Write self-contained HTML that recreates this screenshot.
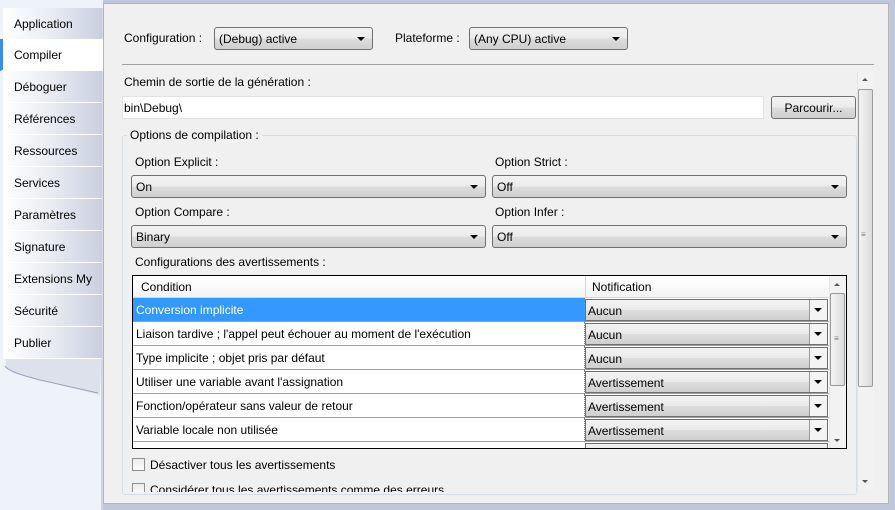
<!DOCTYPE html>
<html><head><meta charset="utf-8"><style>
*{box-sizing:border-box;margin:0;padding:0}
body{width:895px;height:510px;background:#bfc8da;font-family:"Liberation Sans",sans-serif;font-size:12px;color:#000;position:relative;overflow:hidden}
.a{position:absolute}
#side{left:0;top:0;width:103px;height:510px;background:#eef2f9}
.tab{position:absolute;left:3px;width:99px;height:32px;padding:9px 0 0 11px;background:linear-gradient(90deg,#fff 0%,#e8ebf2 50%,#c9cfdf 100%);border-bottom:1px solid #fff}
.tab.sel{background:#fff;left:0;width:104px;border-left:3px solid #3a8ee6;padding-left:11px}
#panel{left:103px;top:3px;width:786px;height:501px;background:#f0f0f0;border:1px solid #b5b5b5}
.cb,.btn{position:absolute;height:23px;border:1px solid #707070;border-radius:3px;background:linear-gradient(#f2f2f2 0%,#ebebeb 50%,#dddddd 51%,#cfcfcf 100%);padding:4px 0 0 4px}
.cb:after{content:"";position:absolute;right:7px;top:9px;border-left:4px solid transparent;border-right:4px solid transparent;border-top:4px solid #000}
.row{position:absolute;left:133px;width:696px;height:24px;border-bottom:1px solid #a0a0a0;background:#fff}
.row .t{position:absolute;left:3px;top:5px}
.row .n{position:absolute;left:452px;top:1px;width:243px;height:22px;border:1px solid #707070;background:linear-gradient(#f2f2f2 0%,#ebebeb 50%,#dddddd 51%,#cfcfcf 100%);padding:4px 0 0 2px}
.row .n:after{content:"";position:absolute;right:0;top:0;width:17px;height:20px;border-left:1px solid #999;background:#f4f4f4}
.row .n i{position:absolute;right:5px;top:8px;border-left:4px solid transparent;border-right:4px solid transparent;border-top:4px solid #000;z-index:2}
.row .sp{position:absolute;left:451px;top:0;width:1px;height:24px;border-left:1px dotted #888}
.chk{position:absolute;width:13px;height:13px;border:1px solid #8f8f8f;background:linear-gradient(#ececec,#fcfcfc)}
.sb{background:#f2f2f2;border-left:1px solid #e5e5e5}
.thumb{position:absolute;border:1px solid #9a9a9a;border-radius:2px;background:linear-gradient(90deg,#f3f3f3,#dcdcdc)}
</style></head><body>
<div id="side" class="a">
<svg class="a" style="left:0;top:0" width="103" height="510"><path d="M3 8 H102 V300 L100 395 Q60 385 20 375 Q8 372 6 366 Z" fill="#dce1ec"/><path d="M5 366 Q8 372 40 380 L98 393" stroke="#9aa2b8" fill="none"/><line x1="102" y1="8" x2="102" y2="510" stroke="#b0b8cc"/></svg>
<div class="tab" style="top:8px">Application</div>
<div class="tab sel" style="top:39px">Compiler</div>
<div class="tab" style="top:71px">Déboguer</div>
<div class="tab" style="top:103px">Références</div>
<div class="tab" style="top:135px">Ressources</div>
<div class="tab" style="top:167px">Services</div>
<div class="tab" style="top:199px">Paramètres</div>
<div class="tab" style="top:231px">Signature</div>
<div class="tab" style="top:263px">Extensions My</div>
<div class="tab" style="top:295px">Sécurité</div>
<div class="tab" style="top:327px">Publier</div>
</div>
<div id="panel" class="a"></div>
<div class="a" style="left:124px;top:31px">Configuration :</div>
<div class="cb" style="left:214px;top:27px;width:159px">(Debug) active</div>
<div class="a" style="left:395px;top:31px">Plateforme :</div>
<div class="cb" style="left:469px;top:27px;width:159px">(Any CPU) active</div>
<div class="a" style="left:122px;top:64px;width:752px;height:1px;background:#a0a0a0"></div>
<div class="a sb" style="left:857px;top:72px;width:17px;height:418px"></div>
<div class="thumb" style="left:858px;top:89px;width:15px;height:298px"></div>
<div class="a" style="left:861px;top:230px;font-size:8px;color:#777">≡</div>
<div class="a" style="left:862px;top:78px;border-left:3px solid transparent;border-right:3px solid transparent;border-bottom:3px solid #555"></div>
<div class="a" style="left:862px;top:480px;border-left:3px solid transparent;border-right:3px solid transparent;border-top:3px solid #555"></div>
<div class="a" style="left:124px;top:75px">Chemin de sortie de la génération :</div>
<div class="a" style="left:122px;top:96px;width:642px;height:23px;background:#fff;border:1px solid #e2e2e2;padding:4px 0 0 1px">bin\Debug\</div>
<div class="btn" style="left:771px;top:96px;width:85px;text-align:center;padding-left:0">Parcourir...</div>
<div class="a" style="left:122px;top:135px;width:735px;height:360px;border:1px solid #d5dfe5;border-radius:3px"></div>
<div class="a" style="left:127px;top:128px;background:#f0f0f0;padding:0 3px">Options de compilation :</div>
<div class="a" style="left:135px;top:155px">Option Explicit :</div>
<div class="cb" style="left:131px;top:175px;width:355px">On</div>
<div class="a" style="left:495px;top:155px">Option Strict :</div>
<div class="cb" style="left:492px;top:175px;width:355px">Off</div>
<div class="a" style="left:135px;top:205px">Option Compare :</div>
<div class="cb" style="left:131px;top:225px;width:355px">Binary</div>
<div class="a" style="left:495px;top:205px">Option Infer :</div>
<div class="cb" style="left:492px;top:225px;width:355px">Off</div>
<div class="a" style="left:135px;top:255px">Configurations des avertissements :</div>
<div class="a" style="left:132px;top:275px;width:715px;height:174px;border:1px solid #000;background:#fff;overflow:hidden">
<div class="a" style="left:0;top:0;width:696px;height:22px;background:linear-gradient(#fff,#f4f4f4);border-bottom:1px solid #d5d5d5"></div>
<div class="a" style="left:452px;top:0;width:1px;height:22px;background:#d5d5d5"></div>
<div class="a" style="left:8px;top:4px">Condition</div>
<div class="a" style="left:459px;top:4px">Notification</div>
<div class="a sb" style="left:696px;top:0;width:17px;height:172px"></div>
<div class="thumb" style="left:697px;top:17px;width:15px;height:93px"></div>
<div class="a" style="left:701px;top:58px;font-size:8px;color:#777">≡</div>
<div class="a" style="left:701px;top:7px;border-left:3px solid transparent;border-right:3px solid transparent;border-bottom:3px solid #555"></div>
<div class="a" style="left:701px;top:163px;border-left:3px solid transparent;border-right:3px solid transparent;border-top:3px solid #555"></div>
</div>
<div class="row" style="top:298px;background:linear-gradient(90deg,#3399ff 0,#3399ff 452px,#fff 452px)"><span class="t" style="color:#fff">Conversion implicite</span><div class="sp"></div><div class="n">Aucun<i></i></div></div>
<div class="row" style="top:322px"><span class="t">Liaison tardive ; l'appel peut échouer au moment de l'exécution</span><div class="sp"></div><div class="n">Aucun<i></i></div></div>
<div class="row" style="top:346px"><span class="t">Type implicite ; objet pris par défaut</span><div class="sp"></div><div class="n">Aucun<i></i></div></div>
<div class="row" style="top:370px"><span class="t">Utiliser une variable avant l'assignation</span><div class="sp"></div><div class="n">Avertissement<i></i></div></div>
<div class="row" style="top:394px"><span class="t">Fonction/opérateur sans valeur de retour</span><div class="sp"></div><div class="n">Avertissement<i></i></div></div>
<div class="row" style="top:418px"><span class="t">Variable locale non utilisée</span><div class="sp"></div><div class="n">Avertissement<i></i></div></div>
<div class="a" style="left:133px;top:442px;width:696px;height:6px;overflow:hidden;background:#fff"><div class="a" style="left:452px;top:1px;width:243px;height:10px;border:1px solid #707070;background:#eee"></div></div>
<div class="chk" style="left:132px;top:458px"></div>
<div class="a" style="left:150px;top:458px">Désactiver tous les avertissements</div>
<div class="a" style="left:130px;top:480px;width:720px;height:12px;overflow:hidden"><div class="chk" style="left:2px;top:3px"></div><div class="a" style="left:20px;top:3px">Considérer tous les avertissements comme des erreurs</div></div>
</body></html>
